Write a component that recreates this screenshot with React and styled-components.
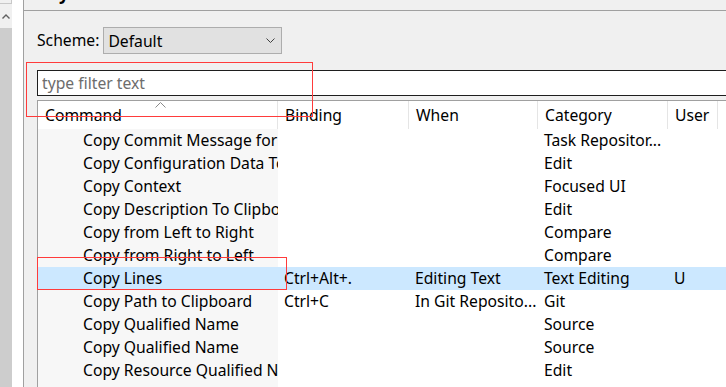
import React from 'react';
import styled, { createGlobalStyle } from 'styled-components';

const rows = [
  { command: 'Copy Commit Message for Task', binding: '', when: '', category: 'Task Repositor...', user: '' },
  { command: 'Copy Configuration Data To Clipboard', binding: '', when: '', category: 'Edit', user: '' },
  { command: 'Copy Context', binding: '', when: '', category: 'Focused UI', user: '' },
  { command: 'Copy Description To Clipboard', binding: '', when: '', category: 'Edit', user: '' },
  { command: 'Copy from Left to Right', binding: '', when: '', category: 'Compare', user: '' },
  { command: 'Copy from Right to Left', binding: '', when: '', category: 'Compare', user: '' },
  { command: 'Copy Lines', binding: 'Ctrl+Alt+.', when: 'Editing Text', category: 'Text Editing', user: 'U', selected: true },
  { command: 'Copy Path to Clipboard', binding: 'Ctrl+C', when: 'In Git Reposito...', category: 'Git', user: '' },
  { command: 'Copy Qualified Name', binding: '', when: '', category: 'Source', user: '' },
  { command: 'Copy Qualified Name', binding: '', when: '', category: 'Source', user: '' },
  { command: 'Copy Resource Qualified Name', binding: '', when: '', category: 'Edit', user: '' },
  { command: 'Copy Selection', binding: '', when: '', category: 'Edit', user: '' }
];

const columns = [
  { key: 'command', title: 'Command', width: 240 },
  { key: 'binding', title: 'Binding', width: 131 },
  { key: 'when', title: 'When', width: 129 },
  { key: 'category', title: 'Category', width: 130 },
  { key: 'user', title: 'User', width: 50 }
];

const App = () => {
  return (
    <>
      <GlobalStyle />
      <Frame>
        <ScrollStrip>
          <ScrollCap />
          <ScrollArrow viewBox="0 0 8 5">
            <polyline points="0.5,4.5 4,1 7.5,4.5" />
          </ScrollArrow>
          <ScrollThumb />
        </ScrollStrip>
        <Gutter />
        <Panel>
          <TitleBar>
            <PageTitle>Keys</PageTitle>
          </TitleBar>
          <Content>
            <SchemeRow>
              <Label>Scheme:</Label>
              <Select>
                <span>Default</span>
                <Chevron viewBox="0 0 9 5">
                  <polyline points="0.5,0.5 4.5,4.5 8.5,0.5" />
                </Chevron>
              </Select>
            </SchemeRow>
            <FilterInput placeholder="type filter text" readOnly />
            <Table>
              <HeaderRow>
                {columns.map((col) => (
                  <HeaderCell key={col.key} $width={col.width}>
                    {col.title}
                    {col.key === 'command' && (
                      <SortArrow viewBox="0 0 11 6">
                        <polyline points="0.5,5.5 5.5,0.5 10.5,5.5" />
                      </SortArrow>
                    )}
                  </HeaderCell>
                ))}
                <HeaderFiller />
              </HeaderRow>
              {rows.map((row, i) => (
                <Row key={i} $selected={row.selected}>
                  {columns.map((col) => (
                    <Cell key={col.key} $width={col.width} $tree={col.key === 'command'} $selected={row.selected}>
                      {row[col.key]}
                    </Cell>
                  ))}
                </Row>
              ))}
            </Table>
          </Content>
          <Annotation $top={62} $left={2} $width={287} $height={55} />
          <Annotation $top={257} $left={13} $width={250} $height={33} />
        </Panel>
      </Frame>
    </>
  );
};

export default App;

const GlobalStyle = createGlobalStyle`
  body {
    margin: 0;
    background: #f0f0f0;
    overflow: hidden;
    font-family: "Noto Sans", "Open Sans", sans-serif;
    font-size: 15.7px;
    color: #000;
  }
`;

const Frame = styled.div`
  display: flex;
  width: 726px;
  height: 387px;
  overflow: hidden;
`;

const ScrollStrip = styled.div`
  width: 12px;
  display: flex;
  flex-direction: column;
  align-items: center;
  background: #f0f0f0;
`;

const ScrollCap = styled.div`
  width: 12px;
  height: 4px;
  border-bottom: 1px solid #c8c8c8;
  border-right: 1px solid #c8c8c8;
  box-sizing: border-box;
`;

const ScrollArrow = styled.svg`
  width: 8px;
  height: 5px;
  margin-top: 10px;
  fill: none;
  stroke: #606060;
  stroke-width: 1.4;
`;

const ScrollThumb = styled.div`
  align-self: stretch;
  flex: 1;
  margin-top: 9px;
  background: #cdcdcd;
`;

const Gutter = styled.div`
  width: 11px;
  background: #fff;
  border-right: 1px solid #a0a0a0;
`;

const Panel = styled.div`
  position: relative;
  flex: 1;
  min-width: 0;
  background: #f0f0f0;
  overflow: hidden;
`;

const TitleBar = styled.div`
  height: 10px;
  border-bottom: 1px solid #a0a0a0;
  overflow: hidden;
`;

const PageTitle = styled.div`
  margin: -17px 0 0 14px;
  font-size: 17px;
  font-weight: bold;
  line-height: 22px;
`;

const Content = styled.div`
  padding-left: 13px;
  display: flex;
  flex-direction: column;
`;

const SchemeRow = styled.div`
  display: flex;
  align-items: center;
  gap: 4px;
  margin-top: 16px;
  height: 27px;
`;

const Label = styled.span`
  line-height: 27px;
`;

const Select = styled.div`
  width: 179px;
  height: 27px;
  box-sizing: border-box;
  background: #e1e1e1;
  border: 1px solid #adadad;
  display: flex;
  align-items: center;
  justify-content: space-between;
  padding: 0 6px 0 4px;
`;

const Chevron = styled.svg`
  width: 9px;
  height: 5px;
  fill: none;
  stroke: #404040;
  stroke-width: 1;
`;

const FilterInput = styled.input`
  margin-top: 16px;
  width: calc(100% + 20px);
  height: 26px;
  box-sizing: border-box;
  border: 1px solid #1e1e1e;
  background: #fff;
  padding: 0 4px;
  font: inherit;
  outline: none;
  &::placeholder {
    color: #6d6d6d;
  }
`;

const Table = styled.div`
  margin-top: 4px;
  width: calc(100% + 20px);
  border-top: 1px solid #a0a0a0;
  border-left: 1px solid #a0a0a0;
  background: #fff;
`;

const HeaderRow = styled.div`
  display: flex;
  height: 28px;
  background: #fff;
`;

const HeaderCell = styled.div`
  position: relative;
  flex: 0 0 ${(p) => p.$width}px;
  box-sizing: border-box;
  border-right: 1px solid #e5e5e5;
  padding-left: 7px;
  line-height: 28px;
  white-space: nowrap;
  overflow: hidden;
`;

const HeaderFiller = styled.div`
  flex: 1;
`;

const SortArrow = styled.svg`
  position: absolute;
  top: 1px;
  left: 117px;
  width: 11px;
  height: 6px;
  fill: none;
  stroke: #8a8a8a;
  stroke-width: 1;
`;

const Row = styled.div`
  display: flex;
  height: 23px;
  background: ${(p) => (p.$selected ? '#cce8ff' : '#fff')};
`;

const Cell = styled.div`
  flex: 0 0 ${(p) => p.$width}px;
  box-sizing: border-box;
  padding-left: ${(p) => (p.$tree ? 45 : 6)}px;
  background: ${(p) => (p.$tree && !p.$selected ? '#f7f7f7' : 'transparent')};
  line-height: 23px;
  white-space: nowrap;
  overflow: hidden;
`;

const Annotation = styled.div`
  position: absolute;
  top: ${(p) => p.$top}px;
  left: ${(p) => p.$left}px;
  width: ${(p) => p.$width}px;
  height: ${(p) => p.$height}px;
  box-sizing: border-box;
  border: 1px solid #ff3b3b;
  pointer-events: none;
`;
